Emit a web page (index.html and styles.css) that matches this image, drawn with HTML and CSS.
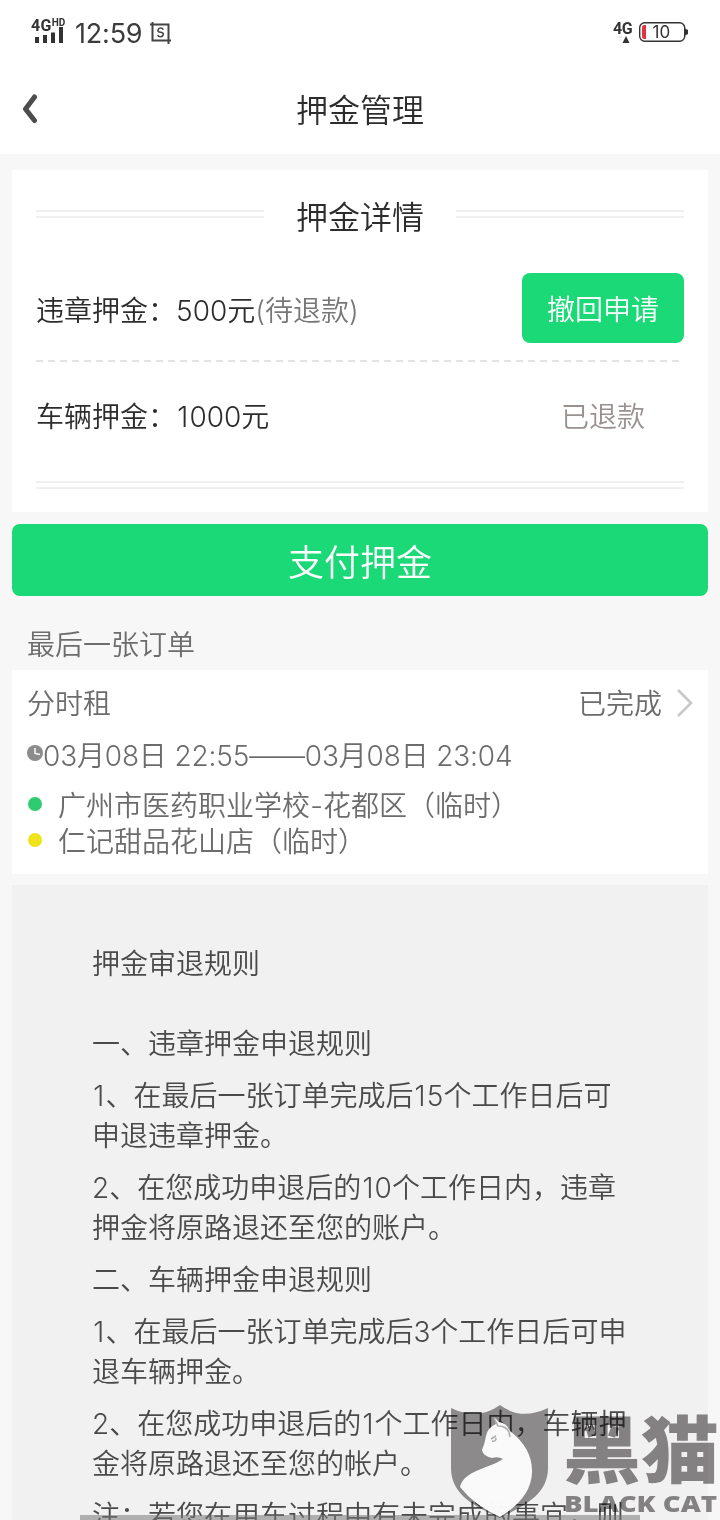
FILE: index.html
```html
<!DOCTYPE html>
<html lang="zh-CN">
<head>
<meta charset="utf-8">
<title>押金管理</title>
<link rel="stylesheet" href="styles.css">
</head>
<body>
<div class="screen">
  <header class="top">
    <div class="status">
      <div class="status-left">
        <div class="net"><div class="net-label">4G<sup>HD</sup></div>
          <svg class="bars" width="30" height="16" viewBox="0 0 30 16"><path d="M1 10h4v6H1zM9 8h4v8H9zM17 5.500h4V16h-4zM25 0h4v16h-4z" fill="#333"/></svg>
        </div>
        <span class="clock">12:59</span>
        <svg class="shot" width="22" height="22" viewBox="0 0 22 22"><path d="M0 2.500h18.500V22M2.500 0v18.500H21" fill="none" stroke="#444" stroke-width="2"/><path d="M13.300 7.600Q12.500 6 10.500 6T8 8t2.600 2.300 2.700 2.300-2.700 2.200-2.900-1.900" fill="none" stroke="#444" stroke-width="1.600"/></svg>
      </div>
      <div class="status-right">
        <div class="net2"><span>4G</span><svg width="20" height="7" viewBox="0 0 20 7"><path d="M13 0l3.500 7h-7z" fill="#333"/><path d="M4 1h5M6 4h2" stroke="#ddd"/></svg></div>
        <svg width="49" height="20" viewBox="0 0 49 20"><rect x=".7" y=".7" width="45" height="18.600" rx="5" fill="#fff" stroke="#333" stroke-width="1.400"/><path d="M7 3v14H5q-2 0-2-3V6q0-3 2-3z" fill="#e2333f"/><path d="M46 6.500l3 1.500v4l-3 1.500z" fill="#333"/><text class="batt" x="13.500" y="16">10</text></svg>
      </div>
    </div>
    <div class="nav">
      <svg class="back" width="18" height="30" viewBox="0 0 18 30"><path d="M13.500 3L4.500 15l9 11.500" fill="none" stroke="#4c4c4c" stroke-width="5" stroke-linecap="round" stroke-linejoin="round"/></svg>
      <h1>押金管理</h1>
    </div>
  </header>

  <section class="deposit">
    <div class="heading"><i class="rail"></i><h2>押金详情</h2><i class="rail"></i></div>
    <div class="row row-first">
      <div>违章押金：<span>500元</span><span class="muted">(待退款)</span></div>
      <button class="revoke">撤回申请</button>
    </div>
    <div class="dash"></div>
    <div class="row row-second">
      <div>车辆押金：<span><span class="one">1</span>000元</span></div>
      <span class="done">已退款</span>
    </div>
    <i class="rail end"></i>
  </section>

  <button class="pay">支付押金</button>
  <div class="label">最后一张订单</div>

  <section class="order">
    <div class="order-head"><span>分时租</span><span class="state">已完成<svg width="20" height="32" viewBox="0 0 20 32"><path d="M3 2l13 13L3 28" fill="none" stroke="#c8c8c8" stroke-width="2.600"/></svg></span></div>
    <div class="time"><svg width="16" height="16" viewBox="0 0 16 16"><circle cx="8" cy="8" r="8" fill="#8c8c8c"/><path d="M8 3v5.500l5 1" fill="none" stroke="#fff" stroke-width="1.500"/></svg><span>03月08日 22:55——03月08日 23:04</span></div>
    <div class="place"><i class="dot green"></i>广州市医药职业学校<b class="hy">-</b>花都区（临时）</div>
    <div class="place"><i class="dot yellow"></i>仁记甜品花山店（临时）</div>
  </section>

  <section class="rules">
    <h3>押金审退规则</h3>
    <p>一、违章押金申退规则</p>
    <p><span class="one">1</span>、在最后一张订单完成后<span class="one">1</span>5个工作日后可<br>申退违章押金。</p>
    <p>2、在您成功申退后的<span class="one">1</span>0个工作日内，违章<br>押金将原路退还至您的账户。</p>
    <p>二、车辆押金申退规则</p>
    <p><span class="one">1</span>、在最后一张订单完成后3个工作日后可申<br>退车辆押金。</p>
    <p>2、在您成功申退后的<span class="one">1</span>个工作日内，车辆押<br>金将原路退还至您的帐户。</p>
    <p>注：若您在用车过程中有未完成的事宜，则</p>
  </section>

  <div class="home-bar"></div>
  <svg class="mark" width="290" height="130" viewBox="0 0 290 130">
    <path class="shield" d="M21 18Q48 31 70 15Q91 31 118 18V78C118 106 91 117 70 128C47 117 21 106 21 78Z"/>
    <path class="cat" d="M64 27L69 32Q77 33 80 41Q103 59 102 83Q101 108 70 127Q44 115 30 97C34 80 61 78 73 69Q68 66 62 68Q53 66 52 60Q55 53 56 46Q58 37 66 34Z"/>
    <path class="detail" d="M64 28l4 8q8 0 11 6l1 5M61 49l5-3M62 51q4 1 4-3"/>
    <text class="mark-cn" x="133" y="87" textLength="156" lengthAdjust="spacingAndGlyphs">黑猫</text>
    <text class="mark-en" x="134" y="122" textLength="153" lengthAdjust="spacingAndGlyphs">BLACK CAT</text>
  </svg>
</div>
</body>
</html>
```
FILE: styles.css
```css
* { box-sizing: border-box; }
body { margin: 0; background: #f7f7f7; }
.screen {
  position: relative; width: 720px; height: 1520px; overflow: hidden;
  display: flex; flex-direction: column;
  font: 350 28px/40px Inter, "Noto Sans CJK SC", sans-serif;
  color: #2c2c2c; white-space: nowrap;
}
h1, h2, h3, p { margin: 0; font-weight: inherit; font-size: inherit; }
svg { display: block; flex: none; }
i { display: block; }
button { border: 0; padding: 0; font: inherit; color: #fff; background: #1bd977; border-radius: 8px; }

.top { flex: none; height: 154px; background: #fff; }
.status { height: 64px; display: flex; justify-content: space-between; padding: 0 32px 0 31px; }
.status-left { display: flex; align-items: flex-start; }
.net { width: 44px; padding-top: 18px; }
.net-label { font: 700 16px/14px Roboto, sans-serif; height: 9px; line-height: 15px; letter-spacing: .3px; color: #333; }
.net-label sup { font-size: 10px; line-height: 0; vertical-align: 5px; letter-spacing: 0; }
.bars { margin-left: 3px; }
.clock { font: 400 27px/34px Inter, sans-serif; margin-top: 17px; width: 75px; color: #3c3c3c; letter-spacing: -.2px; }
.shot { margin-top: 22px; }
.status-right { display: flex; padding-top: 22px; gap: 6px; }
.net2 { width: 20px; color: #333; font: 700 16px/14px Roboto, sans-serif; letter-spacing: -.5px; }
.net2 span { display: block; height: 14px; }
.batt { font: 400 17px Inter, sans-serif; fill: #333; letter-spacing: 0; }
.nav { height: 90px; display: grid; grid-template-columns: 60px 1fr 60px; align-items: center; }
.back { margin-left: 21px; }
.nav h1, .heading h2 { font-size: 32px; text-align: center; padding-top: 3px; }

.deposit { flex: none; margin: 16px 12px 0; height: 342px; padding: 0 24px; background: #fff; }
.heading { display: flex; justify-content: space-between; height: 92px; align-items: center; }
.rail { width: 228px; height: 8px; border: solid #efefef; border-width: 2px 0; margin-bottom: 4px; }
.row { display: flex; align-items: center; justify-content: space-between; }
.row-first { height: 92px; }
.row-first > div { padding-top: 6px; }
.revoke { width: 162px; height: 70px; padding-top: 4px; }
.muted { color: #777; }
.dash { height: 2px; margin-top: 6px; background: repeating-linear-gradient(90deg, #e4e4e4 0 7px, #fff 7px 12px); }
.row-second { height: 109px; }
.done { color: #999190; margin-right: 39px; }
.end { width: 100%; margin-top: 10px; }
.one { padding: 0 1.2px; }

.pay { flex: none; margin: 12px 12px 0; height: 72px; padding-top: 5px; font-size: 36px; }
.label { flex: none; height: 74px; padding: 29px 27px 0; color: #6c6c6c; }

.order { flex: none; margin: 0 12px; height: 204px; padding: 14px 15px 0; background: #fff; color: #6c6c6c; }
.order-head, .state, .time, .place { display: flex; align-items: center; }
.order-head { justify-content: space-between; height: 40px; }
.state { gap: 13px; margin-right: -2px; }
.time { height: 40px; margin: 12px 0 12px; letter-spacing: -.16px; }
.time svg { margin-bottom: 6px; }
.place { height: 36px; }
.hy { width: 13px; font-weight: 350; text-align: center; }
.dot { width: 14px; height: 14px; border-radius: 50%; margin: 0 16px 4px 1px; }
.green { background: #2dcc70; }
.yellow { background: #f0e31b; }

.rules { flex: none; margin: 11px 12px 0; height: 640px; padding: 59px 80px 0; background: #f1f1f1; color: #4a4a4a; }
.rules h3 { margin-bottom: 40px; }
.rules p { margin-bottom: 12px; }

.home-bar { position: absolute; left: 80px; top: 1515px; width: 560px; height: 5px; background: rgba(120, 120, 120, .55); }
.mark { position: absolute; left: 430px; top: 1390px; }
.shield { fill: #8b8989; fill-opacity: .92; mix-blend-mode: multiply; }
.cat { fill: #fff; fill-opacity: .96; }
.detail { fill: none; stroke: #aaa; stroke-width: 1.5; }
.mark-cn { font: 900 73px "Noto Sans CJK SC", sans-serif; fill: #8b8989; mix-blend-mode: multiply; }
.mark-en { font: 800 23px "Open Sans", sans-serif; fill: #8b8989; mix-blend-mode: multiply; }
```
